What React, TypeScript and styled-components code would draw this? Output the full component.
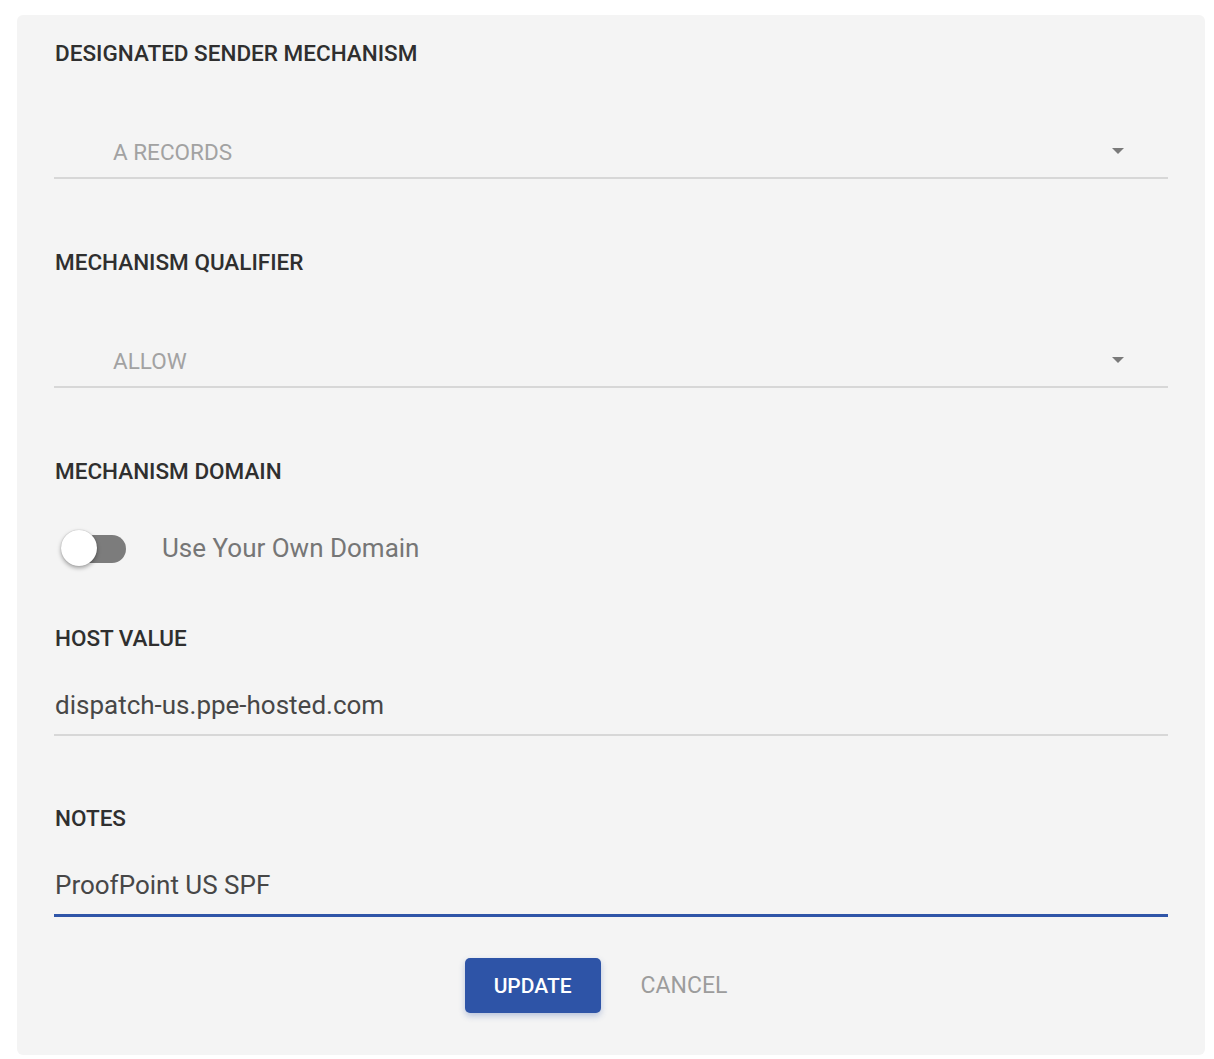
import styled, { createGlobalStyle } from 'styled-components';

const GlobalStyle = createGlobalStyle`
  html, body {
    margin: 0;
    padding: 0;
    background: #ffffff;
    font-family: Roboto, "Liberation Sans", Arial, sans-serif;
  }
`;

const S = {
  Page: styled.div`
    padding: 15px 9px 4px 17px;
  `,
  Panel: styled.form`
    background: #f4f4f4;
    border-radius: 6px;
    padding: 26px 37px 42px 37px;
    display: flex;
    flex-direction: column;
  `,
  Label: styled.div<{ $gap: number }>`
    margin-top: ${({ $gap }) => $gap}px;
    padding-left: 1px;
    font-size: 22.5px;
    line-height: 24px;
    font-weight: 500;
    color: #2f2f2f;
  `,
  Select: styled.div`
    margin-top: 75px;
    padding: 0 44px 13px 59px;
    border-bottom: 2px solid #d7d7d7;
    display: flex;
    align-items: center;
    justify-content: space-between;
  `,
  SelectText: styled.span`
    font-size: 22.5px;
    line-height: 24px;
    color: #a2a2a2;
  `,
  Caret: styled.span`
    width: 0;
    height: 0;
    border-left: 6px solid transparent;
    border-right: 6px solid transparent;
    border-top: 6px solid #7a7a7a;
    margin-top: -3px;
  `,
  ToggleRow: styled.label`
    margin-top: 45px;
    padding-left: 6px;
    height: 40px;
    display: flex;
    align-items: center;
    gap: 36px;
  `,
  Switch: styled.span`
    position: relative;
    width: 66px;
    height: 40px;
    flex-shrink: 0;
  `,
  Track: styled.span`
    position: absolute;
    left: 3px;
    top: 7px;
    width: 63px;
    height: 28px;
    border-radius: 14px;
    background: #7c7c7c;
  `,
  Knob: styled.span`
    position: absolute;
    left: 1px;
    top: 2px;
    width: 36px;
    height: 36px;
    border-radius: 50%;
    background: #ffffff;
    box-shadow: 0 2px 4px rgba(0, 0, 0, 0.35), 0 0 1px rgba(0, 0, 0, 0.3);
  `,
  ToggleText: styled.span`
    font-size: 26px;
    line-height: 28px;
    color: #767676;
  `,
  Input: styled.div<{ $focused?: boolean }>`
    margin-top: 43px;
    padding-bottom: 17px;
    padding-left: 1px;
    font-size: 26px;
    line-height: 24px;
    color: #474747;
    border-bottom: ${({ $focused }) => ($focused ? '3px solid #2f55a8' : '2px solid #d7d7d7')};
  `,
  Actions: styled.div`
    margin-top: 41px;
    display: flex;
    justify-content: center;
    align-items: center;
    padding-right: 6px;
  `,
  Primary: styled.button`
    width: 136px;
    height: 55px;
    margin-right: 16px;
    border: none;
    border-radius: 5px;
    background: #2e54a7;
    color: #ffffff;
    font-family: inherit;
    font-size: 21px;
    font-weight: 500;
    box-shadow: 0 3px 6px rgba(46, 84, 167, 0.3);
    cursor: pointer;
  `,
  Secondary: styled.button`
    height: 55px;
    padding: 0 24px;
    border: none;
    background: transparent;
    color: #9c9c9c;
    font-family: inherit;
    font-size: 23px;
    cursor: pointer;
  `,
};

function SelectField({ value }: { value: string }) {
  return (
    <S.Select>
      <S.SelectText>{value}</S.SelectText>
      <S.Caret />
    </S.Select>
  );
}

export default function App() {
  return (
    <S.Page>
      <GlobalStyle />
      <S.Panel onSubmit={(e) => e.preventDefault()}>
        <S.Label $gap={0}>DESIGNATED SENDER MECHANISM</S.Label>
        <SelectField value="A RECORDS" />

        <S.Label $gap={71}>MECHANISM QUALIFIER</S.Label>
        <SelectField value="ALLOW" />

        <S.Label $gap={71}>MECHANISM DOMAIN</S.Label>
        <S.ToggleRow>
          <S.Switch>
            <S.Track />
            <S.Knob />
          </S.Switch>
          <S.ToggleText>Use Your Own Domain</S.ToggleText>
        </S.ToggleRow>

        <S.Label $gap={58}>HOST VALUE</S.Label>
        <S.Input>dispatch-us.ppe-hosted.com</S.Input>

        <S.Label $gap={70}>NOTES</S.Label>
        <S.Input $focused>ProofPoint US SPF</S.Input>

        <S.Actions>
          <S.Primary type="submit">UPDATE</S.Primary>
          <S.Secondary type="button">CANCEL</S.Secondary>
        </S.Actions>
      </S.Panel>
    </S.Page>
  );
}
